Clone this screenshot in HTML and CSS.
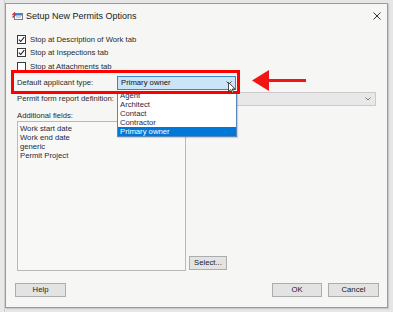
FILE: index.html
```html
<!DOCTYPE html>
<html>
<head>
<meta charset="utf-8">
<link rel="stylesheet" href="styles.css">
</head>
<body>
<div class="screen">
  <div class="dialog">
    <div class="titlebar">
      <svg class="appicon" width="11" height="8" viewBox="0 0 11 8">
        <rect x="2.5" y="1.5" width="8" height="6" fill="#fff" stroke="#6b7d99" stroke-width="1"/>
        <rect x="3" y="2" width="7" height="1.5" fill="#3d7fd1"/>
        <line x1="4" y1="5" x2="9" y2="5" stroke="#9aa6b8" stroke-width="1"/>
        <path d="M0.5 3 L3 0.5 M0.5 5.5 L3.5 2.5" stroke="#e02020" stroke-width="1.2" fill="none"/>
      </svg>
      <span class="title">Setup New Permits Options</span>
      <svg class="close" width="8" height="8" viewBox="0 0 8 8">
        <path d="M0.5 0.5 L7.5 7.5 M7.5 0.5 L0.5 7.5" stroke="#333" stroke-width="1" fill="none"/>
      </svg>
    </div>
    <div class="content">
      <label class="check"><span class="box"><svg width="7" height="7" viewBox="0 0 7 7"><path d="M0.8 3.6 L2.7 5.5 L6.3 1.2" stroke="#222" stroke-width="1.1" fill="none"/></svg></span>Stop at Description of Work tab</label>
      <label class="check"><span class="box"><svg width="7" height="7" viewBox="0 0 7 7"><path d="M0.8 3.6 L2.7 5.5 L6.3 1.2" stroke="#222" stroke-width="1.1" fill="none"/></svg></span>Stop at Inspections tab</label>
      <label class="check"><span class="box"></span>Stop at Attachments tab</label>

      <div class="field first">
        <span class="lbl">Default applicant type:</span>
        <div class="combo active">
          <span class="val">Primary owner</span>
          <svg class="chev" width="6" height="4" viewBox="0 0 6 4"><path d="M0.5 0.5 L3 3 L5.5 0.5" stroke="#444" stroke-width="1" fill="none"/></svg>
        </div>
      </div>
      <div class="field second">
        <span class="lbl">Permit form report definition:</span>
        <div class="combo disabled">
          <span class="val"></span>
          <svg class="chev" width="6" height="4" viewBox="0 0 6 4"><path d="M0.5 0.5 L3 3 L5.5 0.5" stroke="#808080" stroke-width="1" fill="none"/></svg>
        </div>
      </div>
      <div class="addl">Additional fields:</div>
      <div class="fields-row">
        <div class="listbox">
          <div class="li">Work start date</div>
          <div class="li">Work end date</div>
          <div class="li">generic</div>
          <div class="li">Permit Project</div>
        </div>
        <button class="btn select">Select...</button>
      </div>
    </div>
    <div class="footer">
      <button class="btn help">Help</button>
      <span class="spacer"></span>
      <button class="btn ok">OK</button>
      <button class="btn cancel">Cancel</button>
    </div>
  </div>

  <div class="dropdown">
    <div class="dd-inner">
      <div class="dd-item">Agent</div>
      <div class="dd-item">Architect</div>
      <div class="dd-item">Contact</div>
      <div class="dd-item">Contractor</div>
      <div class="dd-item sel">Primary owner</div>
    </div>
  </div>

  <div class="redbox"></div>
  <svg class="arrow" width="56" height="24" viewBox="0 0 56 24">
    <polygon points="0,11.5 17,1 17,22" fill="#f01616"/>
    <rect x="16" y="10" width="38" height="3" fill="#f01616"/>
  </svg>
  <svg class="cursor" width="8" height="12" viewBox="0 0 8 12">
    <path d="M0.5 0.5 L0.5 9.5 L2.7 7.5 L4.2 11 L5.6 10.4 L4.2 7 L7.2 7 Z" fill="#fff" stroke="#222" stroke-width="0.8"/>
  </svg>
</div>
</body>
</html>
```

FILE: styles.css
```css
html, body {
  margin: 0;
  padding: 0;
}
body {
  background: #e4e4e4;
  font-family: "Liberation Sans", Arial, sans-serif;
  font-size: 7.7px;
  color: #2a2a2a;
}
.screen {
  position: relative;
  width: 393px;
  height: 312px;
  overflow: hidden;
  background: linear-gradient(to right, #e9e9e9 0, #e9e9e9 4px, #cfcfcf 4px, #cfcfcf 5px, #e6e6e6 5px);
}
.dialog {
  position: relative;
  margin: 3px 0 0 5px;
  width: 381px;
  height: 303px;
  border: 1px solid #9a9a9a;
  background: #f6f6f4;
  box-shadow: 1px 1px 1px rgba(0,0,0,0.12);
  display: flex;
  flex-direction: column;
}
.titlebar {
  height: 24px;
  display: flex;
  align-items: center;
  padding-left: 6px;
}
.appicon {
  display: block;
  margin-right: 3px;
}
.title {
  font-size: 9px;
  color: #1a1a1a;
}
.close {
  display: block;
  margin-left: auto;
  margin-right: 6px;
}
.content {
  padding: 5px 0 0 11px;
}
.check {
  height: 13.3px;
  display: flex;
  align-items: center;
  color: #2a2a2a;
}
.box {
  width: 9px;
  height: 9px;
  box-sizing: border-box;
  border: 1px solid #3a3a3a;
  background: #fff;
  margin-right: 4px;
  display: flex;
  align-items: center;
  justify-content: center;
}
.box svg {
  display: block;
}
.field {
  height: 14px;
  display: flex;
  align-items: center;
}
.field.first {
  margin-top: 3px;
}
.field.second {
  margin-top: 2px;
}
.lbl {
  width: 100px;
  flex: none;
}
.combo {
  height: 14px;
  box-sizing: border-box;
  display: flex;
  align-items: center;
  padding: 0 3px 0 3px;
}
.combo .val {
  flex: 1;
}
.combo .chev {
  display: block;
}
.combo.active {
  width: 119px;
  background: #cce4f7;
  border: 1px solid #3a84c9;
  color: #111;
}
.combo.disabled {
  width: 259px;
  background: #e8e8e8;
  border: 1px solid #cbcbcb;
  padding-right: 4px;
}
.addl {
  margin-top: 5px;
  height: 10px;
  line-height: 10px;
}
.fields-row {
  display: flex;
  align-items: flex-end;
}
.listbox {
  width: 169px;
  height: 150px;
  box-sizing: border-box;
  border: 1px solid #b9b9b9;
  background: #f8f8f7;
  padding: 3px 0 0 2px;
  color: #1b2a48;
}
.li {
  height: 8.9px;
  line-height: 8.9px;
  white-space: nowrap;
}
.btn {
  font-family: "Liberation Sans", Arial, sans-serif;
  font-size: 7.7px;
  color: #1a1a1a;
  background: #e3e3e3;
  border: 1px solid #adadad;
  height: 14px;
  padding: 0;
  margin: 0;
  box-sizing: border-box;
  display: flex;
  align-items: center;
  justify-content: center;
}
.btn.select {
  width: 38px;
  margin: 0 0 1px 3px;
}
.footer {
  margin-top: 12px;
  padding: 0 8px 0 9px;
  display: flex;
  align-items: center;
}
.spacer {
  flex: 1;
}
.btn.help {
  width: 51px;
}
.btn.ok {
  width: 50px;
  margin-right: 6px;
}
.btn.cancel {
  width: 51px;
}
.dropdown {
  position: absolute;
  left: 117px;
  top: 91px;
  width: 120px;
  height: 46px;
  box-sizing: border-box;
  border: 1px solid #5b86b8;
  background: #fff;
  overflow: hidden;
  box-shadow: 1px 1px 1px rgba(0,0,0,0.15);
  color: #1b2a48;
}
.dd-inner {
  margin-top: -1.5px;
}
.dd-item {
  height: 9px;
  line-height: 9px;
  padding-left: 2px;
  white-space: nowrap;
}
.dd-item.sel {
  background: #0078d7;
  color: #fff;
}
.redbox {
  position: absolute;
  left: 11px;
  top: 70px;
  width: 229px;
  height: 24px;
  box-sizing: border-box;
  border: 3px solid #ff0000;
}
.arrow {
  position: absolute;
  left: 252px;
  top: 69px;
  display: block;
}
.cursor {
  position: absolute;
  left: 228px;
  top: 82px;
  display: block;
}
```
